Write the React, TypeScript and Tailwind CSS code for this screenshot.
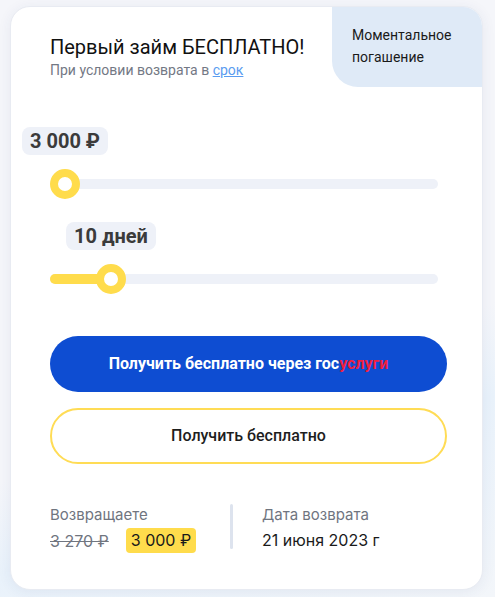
const AMOUNT_POS = 0;
const DAYS_POS = 46;

const Slider = ({ label, pos, fill }: { label: string; pos: number; fill?: boolean }) => {
  return (
    <div className="w-[388px]">
      <div
        className="inline-flex h-[28px] items-center rounded-[8px] bg-[#eef1f8] px-[8px] text-[20px] font-bold text-[#3b3b3b] -translate-x-1/2 whitespace-nowrap"
        style={{ marginLeft: pos + 15 }}
      >
        {label}
      </div>
      <div className="relative mt-[24px] h-[10px] rounded-full bg-[#eef1f8]">
        {fill && (
          <div className="absolute left-0 top-0 h-[10px] rounded-full bg-[#ffdc4c]" style={{ width: pos + 15 }} />
        )}
        <div
          className="absolute top-[-10px] h-[30px] w-[30px] rounded-full border-[8px] border-[#ffdc4c] bg-white"
          style={{ left: pos }}
        />
      </div>
    </div>
  );
};

export default function App() {
  return (
    <div className="h-[597px] w-[495px] bg-[linear-gradient(160deg,#f5f6fa_0%,#f5f6fa_62%,#e9f2fb_74%,#f3f6fa_100%)] pl-[10px] pt-[6px] font-['Roboto',sans-serif]">
      <div className="relative h-[584px] w-[473px] overflow-hidden rounded-[20px] border border-[#e8ebf2] bg-white shadow-[0_2px_14px_rgba(40,60,110,0.07)]">
        <div className="flex justify-between">
          <div className="pl-[39px] pt-[26px]">
            <h1 className="text-[20px] leading-[28px] text-[#111]">Первый займ БЕСПЛАТНО!</h1>
            <p className="text-[14px] leading-[18px] text-[#737884]">
              При условии возврата в{" "}
              <a className="text-[#5a9cf0] underline" href="#">
                срок
              </a>
            </p>
          </div>
          <div className="h-[80px] w-[150px] rounded-bl-[26px] bg-[#dfeaf7] pl-[20px] pt-[17px] text-[14px] leading-[22px] text-[#1a1a1a]">
            Моментальное
            <br />
            погашение
          </div>
        </div>

        <div className="pl-[39px]">
          <div className="mt-[40px]">
            <Slider label="3 000 ₽" pos={AMOUNT_POS} />
          </div>
          <div className="mt-[33px]">
            <Slider label="10 дней" pos={DAYS_POS} fill />
          </div>

          <button className="mt-[52px] flex h-[56px] w-[397px] items-center justify-center rounded-full bg-[#0e4dd2] text-[16px] font-bold text-white">
            Получить бесплатно через гос<span className="text-[#f0203f]">услуги</span>
          </button>
          <button className="mt-[16px] flex h-[56px] w-[397px] items-center justify-center rounded-full border-2 border-[#ffdc55] bg-white text-[16px] font-medium text-[#1e1e1e]">
            Получить бесплатно
          </button>

          <div className="mt-[40px] flex font-['Inter',sans-serif]">
            <div className="w-[180px]">
              <div className="text-[15px] leading-[22px] text-[#70757f]">Возвращаете</div>
              <div className="mt-[2px] flex items-center gap-[17px]">
                <span className="text-[16px] text-[#70757f] line-through">3 270 ₽</span>
                <span className="rounded-[4px] bg-[#ffdc4c] px-[5px] text-[16px] leading-[25px] text-[#1a1a1a]">3 000 ₽</span>
              </div>
            </div>
            <div className="mr-[29px] h-[45px] w-[3px] rounded bg-[#dde3ee]" />
            <div>
              <div className="text-[15px] leading-[22px] text-[#70757f]">Дата возврата</div>
              <div className="mt-[2px] text-[16px] leading-[25px] text-[#1a1a1a]">21 июня 2023 г</div>
            </div>
          </div>
        </div>
      </div>
    </div>
  );
}
